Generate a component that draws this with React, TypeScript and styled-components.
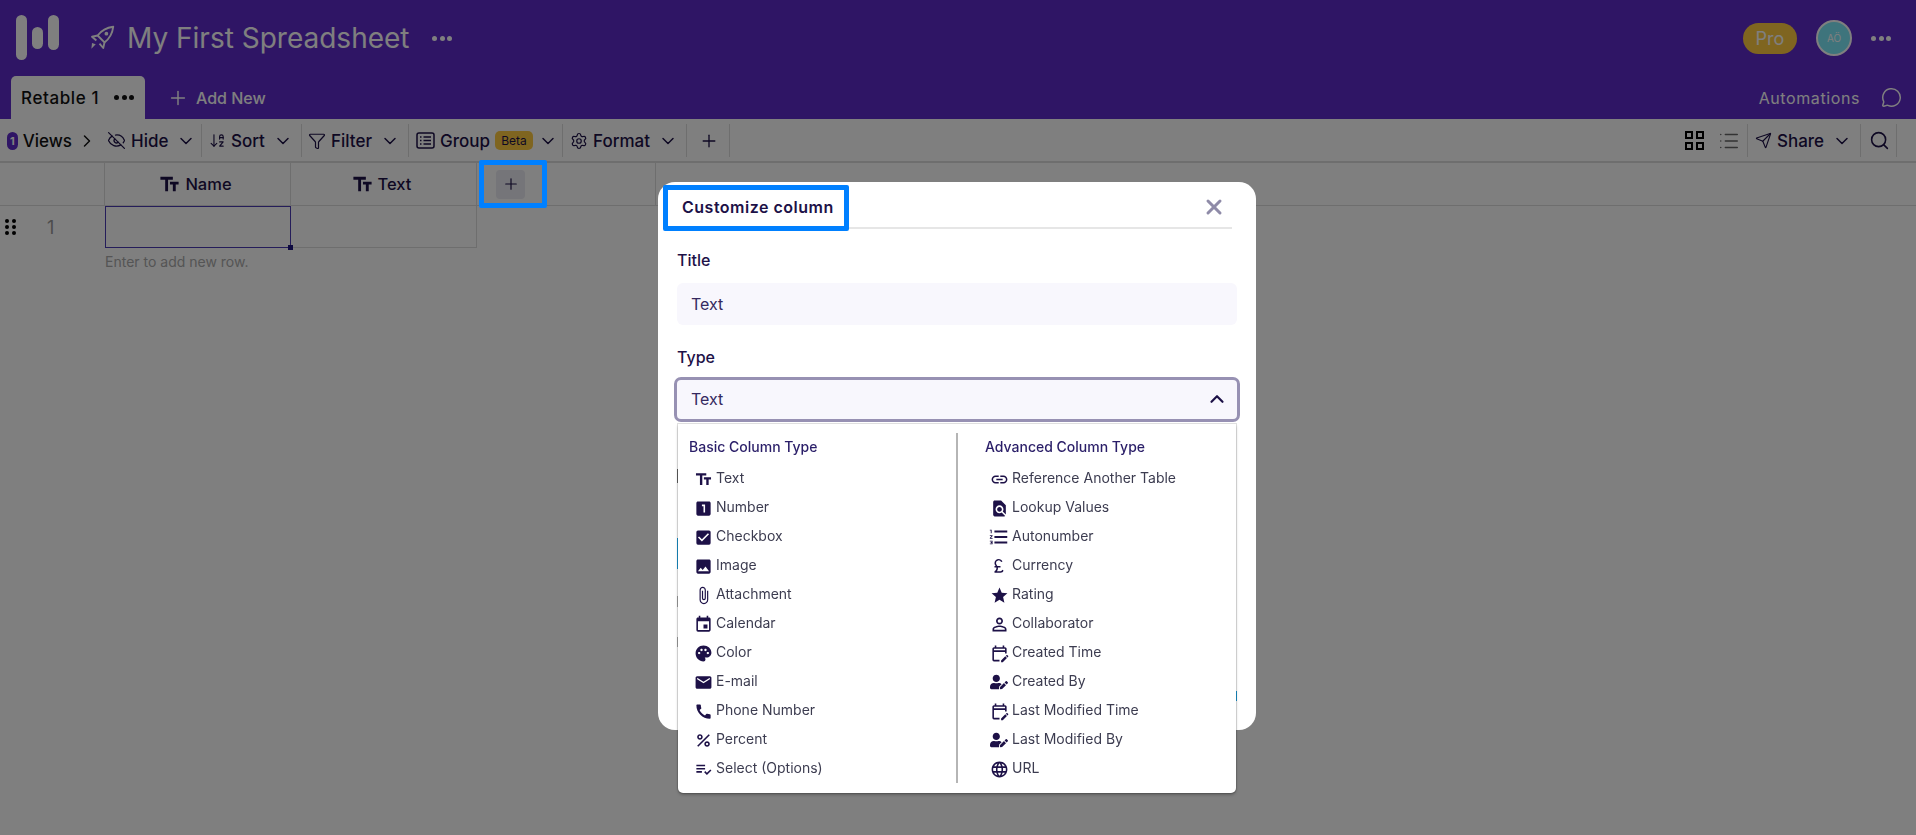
import styled, { createGlobalStyle } from 'styled-components';
import type { ReactNode } from 'react';
import {
  ChevronDown,
  ChevronRight,
  ChevronUp,
  EyeOff,
  ArrowDownAZ,
  Filter,
  Settings,
  Plus,
  List,
  Send,
  Search,
  MessageCircle,
  X
} from 'lucide-react';
import {
  MdTextFields,
  MdLooksOne,
  MdCheckBox,
  MdImage,
  MdAttachFile,
  MdEvent,
  MdPalette,
  MdEmail,
  MdCall,
  MdPercent,
  MdPlaylistAddCheck,
  MdLink,
  MdFindInPage,
  MdFormatListNumbered,
  MdCurrencyPound,
  MdStar,
  MdPersonOutline,
  MdOutlineEditCalendar,
  MdLanguage
} from 'react-icons/md';
import { FaUserEdit } from 'react-icons/fa';

const GlobalStyle = createGlobalStyle`
  html, body {
    margin: 0;
    height: 100%;
    background: #fff;
    font-family: Inter, "Noto Sans", sans-serif;
    overflow: hidden;
  }
  * { box-sizing: border-box; }
`;

const Header = styled.header`
  background: #5e2acb;
  height: 119px;
  display: flex;
  flex-direction: column;
  color: #fff;
`;

const TopRow = styled.div`
  height: 76px;
  display: flex;
  align-items: center;
  padding: 0 0 0 16px;
`;

const Logo = styled.div`
  display: flex;
  gap: 5px;
  width: 71px;
  height: 45px;
  margin-top: -1px;
`;

const LogoBar = styled.span<{ $h: number; $top: number }>`
  width: 11px;
  height: ${p => p.$h}px;
  margin-top: ${p => p.$top}px;
  border-radius: 6px;
  background: #fff;
`;

const SheetTitle = styled.h1`
  margin: 0 0 0 10px;
  width: 305px;
  font-size: 28px;
  font-weight: 400;
  white-space: nowrap;
`;

const Dots = styled.span<{ $size?: number; $color?: string }>`
  display: inline-flex;
  gap: 2.5px;
  span {
    width: ${p => p.$size ?? 4}px;
    height: ${p => p.$size ?? 4}px;
    border-radius: 50%;
    background: ${p => p.$color ?? '#fff'};
  }
`;

const TopRight = styled.div`
  margin-left: auto;
  display: flex;
  align-items: center;
  padding-right: 25px;
`;

const ProPill = styled.div`
  width: 54px;
  height: 31px;
  border-radius: 16px;
  background: #ffca41;
  color: #fff;
  font-size: 18px;
  display: flex;
  align-items: center;
  justify-content: center;
`;

const Avatar = styled.div`
  width: 36px;
  height: 36px;
  margin: 0 19px;
  border-radius: 50%;
  border: 2px solid #fff;
  background: #7ce8f8;
  font-size: 10px;
  display: flex;
  align-items: center;
  justify-content: center;
`;

const TabRow = styled.div`
  height: 43px;
  display: flex;
  align-items: flex-end;
  padding-left: 11px;
`;

const Tab = styled.div`
  width: 134px;
  height: 43px;
  border-radius: 5px 5px 0 0;
  background: #fff;
  color: #111;
  font-size: 17px;
  font-weight: 500;
  letter-spacing: 0.6px;
  display: flex;
  align-items: center;
  padding-left: 10px;
  gap: 15px;
`;

const AddNew = styled.div`
  height: 43px;
  display: flex;
  align-items: center;
  gap: 7px;
  margin-left: 22px;
  font-size: 16px;
  font-weight: 500;
`;

const Automations = styled.div`
  height: 43px;
  margin-left: auto;
  display: flex;
  align-items: center;
  gap: 21px;
  padding-right: 14px;
  font-size: 16px;
  letter-spacing: 0.6px;
`;

const Toolbar = styled.div`
  height: 44px;
  display: flex;
  align-items: center;
  padding: 1px 0 0 5px;
  border-bottom: 2px solid #ddd;
  color: #1d1147;
`;

const ToolItem = styled.div<{ $w: number; $bare?: boolean; $pad?: number }>`
  width: ${p => p.$w}px;
  height: 33px;
  display: flex;
  align-items: center;
  gap: 5px;
  padding-left: ${p => p.$pad ?? 7}px;
  font-size: 17px;
  font-weight: 500;
  border-right: ${p => (p.$bare ? 'none' : '1px solid #ddd')};
  svg { flex: none; }
`;

const ViewsPill = styled(ToolItem)`
  background: #fff;
  border-radius: 4px;
  color: #111;
  padding-left: 2px;
  gap: 5px;
`;

const ViewsBadge = styled.span`
  width: 13px;
  height: 18px;
  border-radius: 6px;
  background: #5e2acb;
  color: #fff;
  font-size: 11px;
  font-weight: 700;
  display: flex;
  align-items: center;
  justify-content: center;
`;

const Chevron = styled(ChevronDown)`
  margin-left: 3px;
`;

const Beta = styled.span`
  height: 19px;
  width: 38px;
  border-radius: 5px;
  background: #ffca41;
  font-size: 12px;
  font-weight: 400;
  display: flex;
  align-items: center;
  justify-content: center;
`;

const Spring = styled.div<{ $basis?: number }>`
  flex: ${p => (p.$basis ? `0 0 ${p.$basis}px` : '1')};
`;

const GridGlyph = styled.div`
  width: 19px;
  height: 19px;
  display: grid;
  grid-template-columns: 1fr 1fr;
  gap: 3px;
  span { border: 2px solid #000; }
`;

const ColumnRow = styled.div`
  height: 43px;
  display: grid;
  grid-template-columns: 105px 186px 186px 179px 1fr;
  border-bottom: 1px solid #ddd;
`;

const HeadCell = styled.div`
  display: flex;
  align-items: center;
  justify-content: center;
  gap: 4px;
  padding-right: 5px;
  border-right: 1px solid #ddd;
  color: #1d1147;
  font-size: 16.5px;
  font-weight: 500;
`;

const AddColumnCell = styled.div`
  display: flex;
  align-items: center;
  padding-left: 19px;
  border-right: 1px solid #ddd;
`;

const AddColumnButton = styled.div`
  width: 29px;
  height: 29px;
  border-radius: 4px;
  background: #eaeaf2;
  color: #1d1147;
  display: flex;
  align-items: center;
  justify-content: center;
`;

const DataRow = styled.div`
  height: 42px;
  display: grid;
  grid-template-columns: 105px 186px 186px;
  width: 477px;
`;

const RowHead = styled.div`
  display: flex;
  align-items: center;
  padding-left: 5px;
  color: #999;
  font-size: 18px;
  gap: 31px;
`;

const Grip = styled.div`
  display: grid;
  grid-template-columns: 4px 4px;
  gap: 2px 3px;
  span {
    width: 4px;
    height: 4px;
    border-radius: 50%;
    background: #000;
  }
`;

const ActiveCell = styled.div`
  position: relative;
  border: 1px solid #4a3bb5;
`;

const CellHandle = styled.span`
  position: absolute;
  right: -3px;
  bottom: -3px;
  width: 5px;
  height: 5px;
  background: #1d1480;
`;

const PlainCell = styled.div`
  border-right: 1px solid #ddd;
  border-bottom: 1px solid #ddd;
`;

const RowHint = styled.div`
  padding: 5px 0 0 105px;
  color: #aaa;
  font-size: 14px;
`;

const Overlay = styled.div`
  position: fixed;
  inset: 0;
  background: rgba(0, 0, 0, 0.5);
  padding: 182px 0 0 658px;
`;

const HighlightBox = styled.div<{ $x: number; $y: number; $w: number; $h: number }>`
  position: absolute;
  left: ${p => p.$x}px;
  top: ${p => p.$y}px;
  width: ${p => p.$w}px;
  height: ${p => p.$h}px;
  border: 5px solid #0080ff;
  border-radius: 2px;
`;

const Modal = styled.div`
  position: relative;
  width: 598px;
  height: 548px;
  background: #fff;
  border-radius: 17px;
  padding: 0 19px;
  color: #1d1147;
`;

const ModalHead = styled.div`
  height: 47px;
  margin-right: 5px;
  display: flex;
  align-items: center;
  justify-content: space-between;
  border-bottom: 2px solid #e6e6e6;
  padding: 4px 6px 0 5px;
`;

const ModalTitle = styled.div`
  font-size: 16px;
  font-weight: 600;
  letter-spacing: 0.5px;
`;

const CloseButton = styled.div`
  color: #8f8ba8;
  display: flex;
`;

const FieldLabel = styled.div<{ $top: number }>`
  margin-top: ${p => p.$top}px;
  height: 20px;
  line-height: 20px;
  font-size: 16px;
  font-weight: 500;
`;

const TextInput = styled.div`
  margin-top: 13px;
  height: 42px;
  border-radius: 6px;
  background: #f8f7fd;
  padding-left: 14px;
  display: flex;
  align-items: center;
  color: #35295f;
  font-size: 16px;
`;

const SelectWrap = styled.div`
  position: relative;
  margin: 10px -3px 0;
`;

const SelectBox = styled.div`
  height: 45px;
  border: 3px solid #9791b3;
  border-radius: 7px;
  background: #f8f7fd;
  padding: 0 9px 2px 14px;
  display: flex;
  align-items: center;
  justify-content: space-between;
  color: #35295f;
  font-size: 16px;
`;

const Dropdown = styled.div`
  position: absolute;
  z-index: 2;
  top: 47px;
  left: 4px;
  width: 558px;
  height: 369px;
  background: #fff;
  border-radius: 0 0 5px 5px;
  box-shadow: 0 0 0 1px rgba(0, 0, 0, 0.12), 0 2px 3px rgba(0, 0, 0, 0.25);
  display: grid;
  grid-template-columns: 278px 1fr;
  padding: 9px 0 10px;
`;

const DropColumn = styled.div<{ $right?: boolean }>`
  padding-left: ${p => (p.$right ? 27 : 11)}px;
  border-left: ${p => (p.$right ? '2px solid #b5b5b5' : 'none')};
`;

const DropHeading = styled.div`
  height: 24px;
  line-height: 27px;
  margin-bottom: 6px;
  font-size: 14px;
  font-weight: 500;
  color: #2a1e68;
  white-space: nowrap;
`;

const DropRow = styled.div`
  height: 29px;
  display: flex;
  align-items: center;
  padding-left: 4px;
  color: #3c3c50;
  font-size: 14px;
  white-space: nowrap;
`;

const DropIcon = styled.span`
  width: 22px;
  flex: none;
  display: flex;
  justify-content: center;
  margin-left: -1px;
  margin-right: 2px;
  margin-top: 3px;
  color: #1d1147;
`;

const HiddenRow = styled.div<{ $top: number; $h: number; $color: string }>`
  margin: ${p => p.$top}px 0 0 0;
  height: ${p => p.$h}px;
  width: 60px;
  background: ${p => p.$color};
`;

const HiddenSave = styled.div`
  height: 10px;
  width: 120px;
  margin: 44px 0 0 auto;
  background: #1a9ad6;
`;

const RocketIcon = () => (
  <svg width="30" height="30" viewBox="0 0 24 24" fill="none" stroke="currentColor" strokeWidth="1.5" strokeLinejoin="round">
    <path d="M21 3c-5 .6-9.500 3-12.500 7l5.500 5.500c4-3 6.400-7.500 7-12.500z" />
    <path d="M8.500 10 4 11l3.500 3M14 15.500 13 20l-3-3.500" />
    <path d="M7 17l-3.500 3.500L4 16z" fill="currentColor" stroke="none" />
    <circle cx="15.500" cy="8.500" r="1.500" fill="currentColor" stroke="none" />
  </svg>
);

const GroupIcon = () => (
  <svg width="19" height="19" viewBox="0 0 19 19" fill="none" stroke="currentColor" strokeWidth="1.5">
    <rect x="1" y="2" width="17" height="15" rx="2" />
    <path d="M4 6h1.500M7.500 6H15M4 9.500h1.500M7.500 9.500H15M4 13h1.500M7.500 13H15" />
  </svg>
);

const Tt = ({ size = 19 }: { size?: number }) => <MdTextFields size={size} />;

const ThreeDots = ({ size, color }: { size?: number; color?: string }) => (
  <Dots $size={size} $color={color}>
    <span />
    <span />
    <span />
  </Dots>
);

const basicTypes: [ReactNode, string][] = [
  [<Tt key="t" />, 'Text'],
  [<MdLooksOne size={19} key="n" />, 'Number'],
  [<MdCheckBox size={19} key="c" />, 'Checkbox'],
  [<MdImage size={19} key="i" />, 'Image'],
  [<MdAttachFile size={19} key="a" />, 'Attachment'],
  [<MdEvent size={19} key="e" />, 'Calendar'],
  [<MdPalette size={19} key="p" />, 'Color'],
  [<MdEmail size={19} key="m" />, 'E-mail'],
  [<MdCall size={19} key="h" />, 'Phone Number'],
  [<MdPercent size={19} key="r" />, 'Percent'],
  [<MdPlaylistAddCheck size={19} key="s" />, 'Select (Options)']
];

const advancedTypes: [ReactNode, string][] = [
  [<MdLink size={19} key="l" />, 'Reference Another Table'],
  [<MdFindInPage size={19} key="f" />, 'Lookup Values'],
  [<MdFormatListNumbered size={22} key="u" />, 'Autonumber'],
  [<MdCurrencyPound size={18} key="g" />, 'Currency'],
  [<MdStar size={19} key="a" />, 'Rating'],
  [<MdPersonOutline size={21} key="o" />, 'Collaborator'],
  [<MdOutlineEditCalendar size={19} key="t" />, 'Created Time'],
  [<FaUserEdit size={18} key="b" />, 'Created By'],
  [<MdOutlineEditCalendar size={19} key="d" />, 'Last Modified Time'],
  [<FaUserEdit size={18} key="y" />, 'Last Modified By'],
  [<MdLanguage size={19} key="w" />, 'URL']
];

const TypeColumn = ({ title, items, right }: { title: string; items: [ReactNode, string][]; right?: boolean }) => (
  <DropColumn $right={right}>
    <DropHeading>{title}</DropHeading>
    {items.map(([icon, label]) => (
      <DropRow key={label}>
        <DropIcon>{icon}</DropIcon>
        {label}
      </DropRow>
    ))}
  </DropColumn>
);

const App = () => (
  <>
    <GlobalStyle />
    <Header>
      <TopRow>
        <Logo>
          <LogoBar $h={45} $top={0} />
          <LogoBar $h={22} $top={12} />
          <LogoBar $h={35} $top={0} />
        </Logo>
        <RocketIcon />
        <SheetTitle>My First Spreadsheet</SheetTitle>
        <ThreeDots size={5} />
        <TopRight>
          <ProPill>Pro</ProPill>
          <Avatar>AÖ</Avatar>
          <ThreeDots size={5} />
        </TopRight>
      </TopRow>
      <TabRow>
        <Tab>
          Retable 1
          <ThreeDots size={5} color="#111" />
        </Tab>
        <AddNew>
          <Plus size={22} strokeWidth={1.6} />
          Add New
        </AddNew>
        <Automations>
          Automations
          <MessageCircle size={21} strokeWidth={1.7} />
        </Automations>
      </TabRow>
    </Header>
    <Toolbar>
      <ViewsPill $w={92} $bare>
        <ViewsBadge>1</ViewsBadge>
        Views
        <ChevronRight size={20} strokeWidth={1.8} />
      </ViewsPill>
      <ToolItem $w={105} $pad={10}>
        <EyeOff size={19} strokeWidth={1.6} />
        Hide
        <Chevron size={20} strokeWidth={1.8} />
      </ToolItem>
      <ToolItem $w={100}>
        <ArrowDownAZ size={17} strokeWidth={1.6} />
        Sort
        <Chevron size={20} strokeWidth={1.8} />
      </ToolItem>
      <ToolItem $w={107} $pad={6}>
        <Filter size={18} strokeWidth={1.6} />
        Filter
        <Chevron size={20} strokeWidth={1.8} />
      </ToolItem>
      <ToolItem $w={154}>
        <GroupIcon />
        Group
        <Beta>Beta</Beta>
        <ChevronDown size={20} strokeWidth={1.8} />
      </ToolItem>
      <ToolItem $w={124}>
        <Settings size={18} strokeWidth={1.6} />
        Format
        <Chevron size={20} strokeWidth={1.8} />
      </ToolItem>
      <ToolItem $w={43} $pad={12}>
        <Plus size={20} strokeWidth={1.6} />
      </ToolItem>
      <Spring />
      <ToolItem $w={33} $bare $pad={0}>
        <GridGlyph>
          <span />
          <span />
          <span />
          <span />
        </GridGlyph>
      </ToolItem>
      <ToolItem $w={30} $pad={0}>
        <List size={22} strokeWidth={1.6} color="#666" />
      </ToolItem>
      <ToolItem $w={113}>
        <Send size={17} strokeWidth={1.6} />
        Share
        <Chevron size={20} strokeWidth={1.8} />
      </ToolItem>
      <ToolItem $w={36} $pad={8}>
        <Search size={21} strokeWidth={1.8} />
      </ToolItem>
      <Spring $basis={19} />
    </Toolbar>
    <ColumnRow>
      <HeadCell />
      <HeadCell>
        <Tt size={23} />
        Name
      </HeadCell>
      <HeadCell>
        <Tt size={23} />
        Text
      </HeadCell>
      <AddColumnCell>
        <AddColumnButton>
          <Plus size={18} strokeWidth={1.6} />
        </AddColumnButton>
      </AddColumnCell>
      <div />
    </ColumnRow>
    <DataRow>
      <RowHead>
        <Grip>
          <span />
          <span />
          <span />
          <span />
          <span />
          <span />
        </Grip>
        1
      </RowHead>
      <ActiveCell>
        <CellHandle />
      </ActiveCell>
      <PlainCell />
    </DataRow>
    <RowHint>Enter to add new row.</RowHint>
    <Overlay>
      <HighlightBox $x={479} $y={160} $w={68} $h={48} />
      <Modal>
        <HighlightBox $x={5} $y={3} $w={186} $h={46} />
        <ModalHead>
          <ModalTitle>Customize column</ModalTitle>
          <CloseButton>
            <X size={24} strokeWidth={3} />
          </CloseButton>
        </ModalHead>
        <FieldLabel $top={21}>Title</FieldLabel>
        <TextInput>Text</TextInput>
        <FieldLabel $top={22}>Type</FieldLabel>
        <SelectWrap>
          <SelectBox>
            Text
            <ChevronUp size={22} strokeWidth={2.4} color="#1d1147" />
          </SelectBox>
          <Dropdown>
            <TypeColumn title="Basic Column Type" items={basicTypes} />
            <TypeColumn title="Advanced Column Type" items={advancedTypes} right />
          </Dropdown>
        </SelectWrap>
        <HiddenRow $top={47} $h={14} $color="#666" />
        <HiddenRow $top={55} $h={31} $color="#1a9ad6" />
        <HiddenRow $top={27} $h={11} $color="#aaa" />
        <HiddenRow $top={30} $h={10} $color="#aaa" />
        <HiddenSave />
      </Modal>
    </Overlay>
  </>
);

export default App;
